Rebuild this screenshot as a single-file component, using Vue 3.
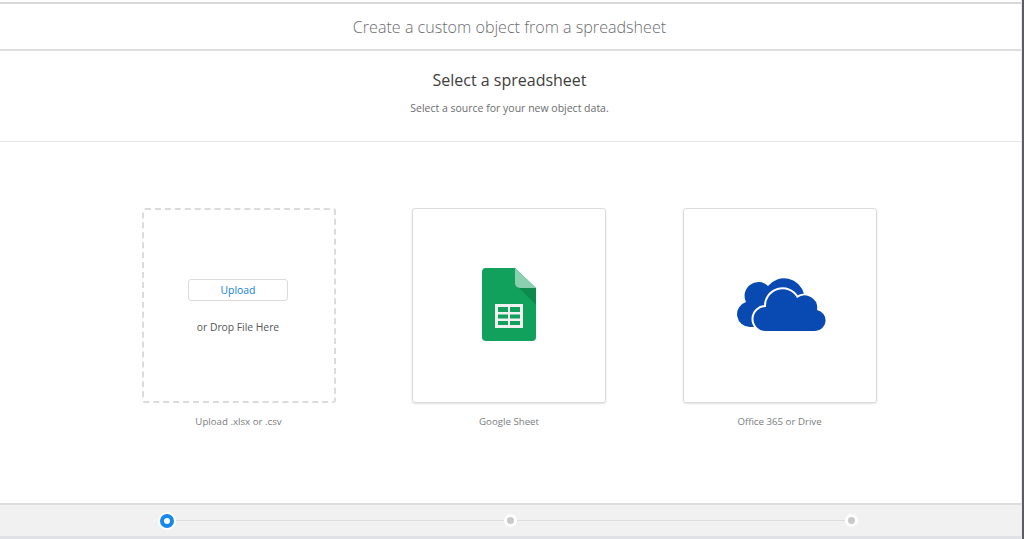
<template>
  <div class="page">
    <div class="main">
      <header class="title-bar">
        <h1>Create a custom object from a spreadsheet</h1>
      </header>
      <section class="intro">
        <h2>Select a spreadsheet</h2>
        <p>Select a source for your new object data.</p>
      </section>
      <section class="sources">
        <div class="source">
          <div class="tile tile-drop">
            <button class="btn-upload">Upload</button>
            <span class="drop-text">or Drop File Here</span>
          </div>
          <span class="source-label">Upload .xlsx or .csv</span>
        </div>
        <div class="source">
          <div class="tile">
            <svg class="icon-sheet" viewBox="0 0 54 73" width="54" height="73">
              <path d="M4 0H33L54 20V69a4 4 0 0 1-4 4H4a4 4 0 0 1-4-4V4a4 4 0 0 1 4-4Z" fill="#11a15c" />
              <path d="M36 19L54 37V20Z" fill="#0d8a4c" />
              <path d="M33 0L54 20H38a5 5 0 0 1-5-5Z" fill="#8bd0ae" />
              <path d="M13 36H41V60H13ZM16 39V44H26V39ZM28 39V44H38V39ZM16 46.500V50.500H26V46.500ZM28 46.500V50.500H38V46.500ZM16 53V57H26V53ZM28 53V57H38V53Z" fill="#f1f1f1" fill-rule="evenodd" />
            </svg>
          </div>
          <span class="source-label">Google Sheet</span>
        </div>
        <div class="source">
          <div class="tile">
            <svg class="icon-cloud" viewBox="0 0 92 55" width="92" height="55">
              <path d="M16 51A12.800 12.800 0 0 1 12 26A13.800 13.800 0 0 1 34 10A20.500 20.500 0 0 1 70 18L70 30L30 51Z" fill="#094ab2" />
              <path d="M31 55A12 12 0 0 1 32 31A16.500 16.500 0 0 1 63 22A12.500 12.500 0 0 1 83 34A10.600 10.600 0 0 1 81 55Z" fill="#094ab2" stroke="#fff" stroke-width="4" paint-order="stroke" />
            </svg>
          </div>
          <span class="source-label">Office 365 or Drive</span>
        </div>
      </section>
      <footer class="progress">
        <div class="track">
          <span class="dot dot-active"></span>
          <span class="line"></span>
          <span class="dot"></span>
          <span class="line"></span>
          <span class="dot"></span>
        </div>
      </footer>
    </div>
    <div class="edge"></div>
  </div>
</template>

<script setup>
</script>

<style>
html,
body {
  margin: 0;
  background: #fff;
}
</style>

<style scoped>
.page {
  height: 539px;
  display: flex;
  overflow: hidden;
  font-family: "Open Sans", "Liberation Sans", sans-serif;
  background: #dfe1e6;
}

.main {
  width: 1021px;
  height: 536px;
  display: flex;
  flex-direction: column;
  background: #fff;
}

.edge {
  flex: 1;
  background: linear-gradient(to right, #e9ebf0 0 1px, #5c5c62 1px);
}

.title-bar {
  margin-top: 2px;
  height: 49px;
  box-sizing: border-box;
  padding-right: 2px;
  border-top: 2px solid #d8d8d8;
  border-bottom: 2px solid #dfdfdf;
  display: flex;
  align-items: center;
  justify-content: center;
}

h1 {
  margin: 0;
  font-size: 16.100px;
  font-weight: 300;
  color: #6b6d70;
}

.intro {
  height: 90px;
  padding-right: 2px;
  border-bottom: 1px solid #e6e6e6;
  text-align: center;
}

h2 {
  margin: 19px 0 0;
  font-size: 16px;
  line-height: 20px;
  font-weight: 400;
  color: #3e3e3c;
}

.intro p {
  margin: 11px 0 0;
  font-size: 10.500px;
  line-height: 14px;
  color: #6b6d70;
}

.sources {
  flex: 1;
  display: flex;
  justify-content: center;
  gap: 76.500px;
  padding: 66px 3px 0 0;
}

.source {
  display: flex;
  flex-direction: column;
  align-items: center;
}

.tile {
  width: 194px;
  height: 195px;
  box-sizing: border-box;
  border: 1px solid #dddbda;
  border-radius: 3px;
  box-shadow: 0 1px 2px rgba(0, 0, 0, 0.12);
  display: flex;
  flex-direction: column;
  align-items: center;
  justify-content: center;
}

.tile-drop {
  padding: 1px 1px 0 0;
  border: 2px dashed #dddbda;
  box-shadow: none;
}

.icon-sheet {
  margin-bottom: 2px;
}

.icon-cloud {
  margin-bottom: 4px;
}

.btn-upload {
  width: 100px;
  height: 22px;
  padding: 0;
  background: #fff;
  border: 1px solid #dddbda;
  border-radius: 3px;
  color: #0f7fdc;
  font-family: inherit;
  font-size: 10.400px;
}

.drop-text {
  margin-top: 19px;
  font-size: 10.300px;
  line-height: 14px;
  color: #54565a;
}

.source-label {
  margin-top: 12px;
  font-size: 9.700px;
  line-height: 14px;
  color: #7a7c80;
}

.progress {
  height: 33px;
  box-sizing: border-box;
  padding-right: 3px;
  border-top: 2px solid #dcdcdc;
  background: #f1f1f1;
  display: flex;
  align-items: center;
  justify-content: center;
}

.track {
  width: 698px;
  display: flex;
  align-items: center;
}

.line {
  flex: 1;
  height: 1px;
  background: #dcdcdc;
}

.dot {
  width: 7px;
  height: 7px;
  border: 3px solid #fff;
  border-radius: 50%;
  background: #c9c9c9;
}

.dot-active {
  width: 6px;
  height: 6px;
  margin-right: 2px;
  border: 4px solid #1589ee;
  background: #fff;
  box-shadow: 0 0 0 2px #fff;
}
</style>
